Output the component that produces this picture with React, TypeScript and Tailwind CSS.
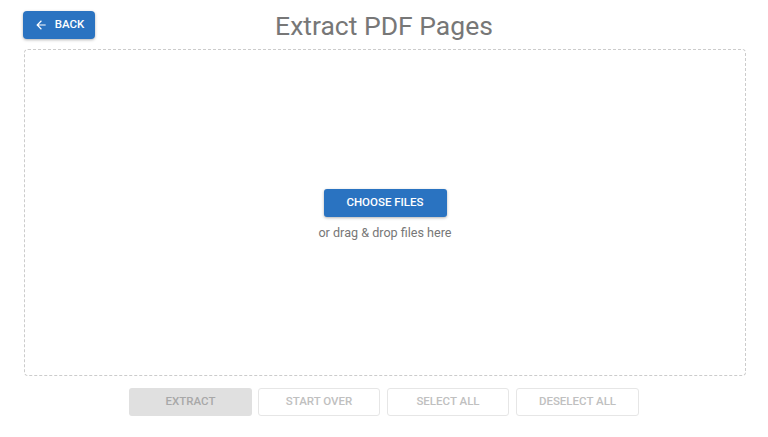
import React from "react";

export default function App() {
  return (
    <div className="w-[768px] h-[437px] bg-white font-['Roboto',sans-serif] overflow-hidden">
      <div className="px-[23px] pt-[11px]">
        <div className="relative flex items-center justify-center h-[28px]">
          <button className="absolute left-0 top-0 h-[28px] w-[72px] flex items-center justify-center gap-[7px] rounded-[4px] bg-[#2a73c1] text-white text-[11.5px] font-medium shadow-[0_1px_3px_rgba(0,0,0,0.3)]">
            <svg width="14" height="14" viewBox="0 0 24 24" fill="currentColor">
              <path d="M20 11H7.83l5.59-5.59L12 4l-8 8 8 8 1.41-1.41L7.83 13H20v-2z" />
            </svg>
            BACK
          </button>
          <h1 className="text-[26.5px] leading-[28px] text-[#777777] font-normal mt-[2px]">Extract PDF Pages</h1>
        </div>
        <div className="mt-[10px] ml-[1px] w-[722px] h-[327px] border border-dashed border-[#cccccc] rounded-[4px] flex flex-col items-center justify-center">
          <button className="mt-[6px] h-[28px] w-[123px] rounded-[3px] bg-[#2a73c1] text-white text-[11.5px] font-medium shadow-[0_1px_3px_rgba(0,0,0,0.3)]">
            CHOOSE FILES
          </button>
          <div className="mt-[7px] text-[12.6px] text-[#777777]">or drag &amp; drop files here</div>
        </div>
      </div>
      <div className="mt-[12px] flex justify-center">
        <button className="h-[28px] w-[123px] rounded-[3px] bg-[#e0e0e0] text-[#a8a8a8] text-[11.5px] font-medium">EXTRACT</button>
        <button className="ml-[6px] h-[28px] w-[122px] rounded-[3px] bg-white border border-[#e6e6e6] text-[#c0c0c0] text-[11.5px] font-medium">START OVER</button>
        <button className="ml-[7px] h-[28px] w-[122px] rounded-[3px] bg-white border border-[#e6e6e6] text-[#c0c0c0] text-[11.5px] font-medium">SELECT ALL</button>
        <button className="ml-[7px] h-[28px] w-[123px] rounded-[3px] bg-white border border-[#e6e6e6] text-[#c0c0c0] text-[11.5px] font-medium">DESELECT ALL</button>
      </div>
    </div>
  );
}
